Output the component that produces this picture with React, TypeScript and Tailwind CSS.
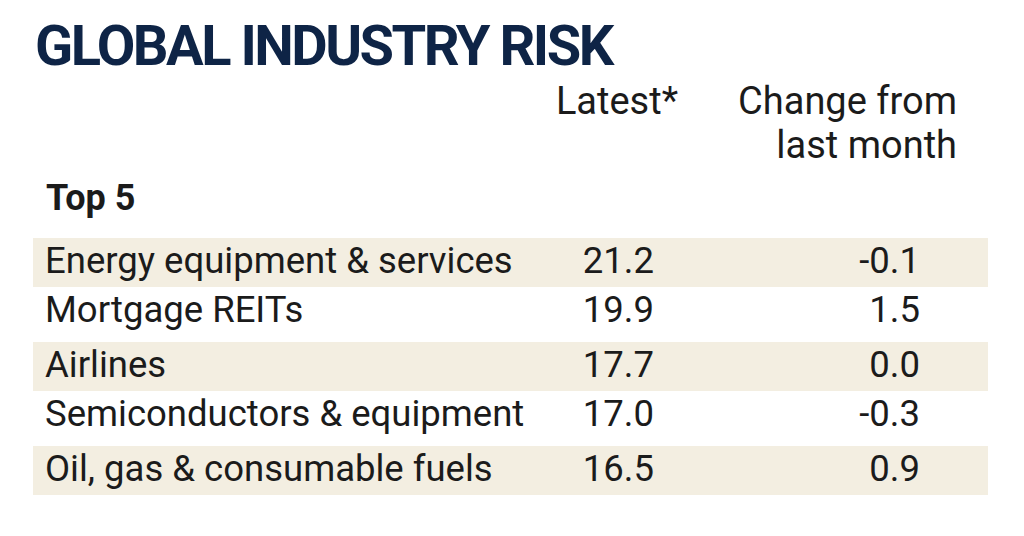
const rows = [
  { name: "Energy equipment & services", latest: "21.2", change: "-0.1" },
  { name: "Mortgage REITs", latest: "19.9", change: "1.5" },
  { name: "Airlines", latest: "17.7", change: "0.0" },
  { name: "Semiconductors & equipment", latest: "17.0", change: "-0.3" },
  { name: "Oil, gas & consumable fuels", latest: "16.5", change: "0.9" },
];

export default function App() {
  return (
    <div className="w-[1024px] h-[536px] bg-white text-[#1b1b1b] font-['Roboto',sans-serif] overflow-hidden">
      <h1 className="ml-[35px] pt-[18px] text-[56px] leading-[56px] font-bold tracking-[-2.5px] text-[#0e2446]">
        GLOBAL INDUSTRY RISK
      </h1>
      <div className="mt-[5px] flex justify-end gap-[60px] pr-[67px] text-[38px] leading-[44px]">
        <div>Latest*</div>
        <div className="text-right">
          Change from
          <br />
          last month
        </div>
      </div>
      <div className="mt-[9px] pl-[46px] text-[36px] leading-[44px] font-bold">Top 5</div>
      <div className="mt-[18px] mx-[33px] w-[955px]">
        {rows.map((r, i) => (
          <div
            key={r.name}
            className={
              "grid grid-cols-[1fr_120px_266px] pr-[68px] pl-[12px] pt-px text-[36.5px] leading-[44px] whitespace-nowrap " +
              (i % 2 === 0 ? "h-[49px] bg-[#f3eee1]" : "h-[55px]")
            }
          >
            <div>{r.name}</div>
            <div className="text-right">{r.latest}</div>
            <div className="text-right">{r.change}</div>
          </div>
        ))}
      </div>
    </div>
  );
}
